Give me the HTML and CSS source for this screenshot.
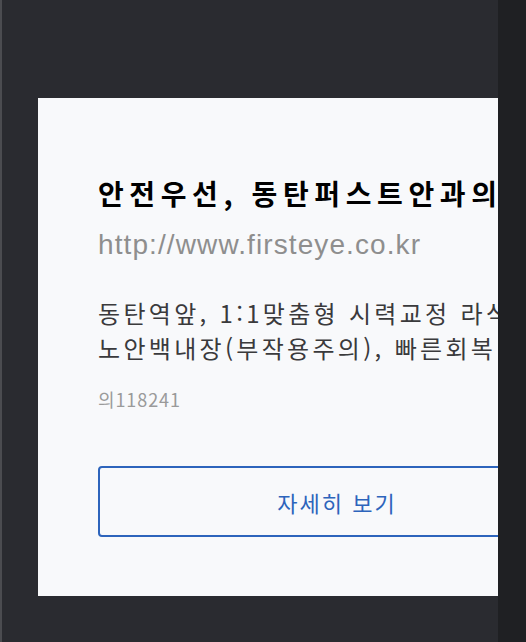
FILE: index.html
```html
<!DOCTYPE html>
<html lang="ko">
<head>
<meta charset="utf-8">
<title>동탄퍼스트안과</title>
<link rel="stylesheet" href="styles.css">
</head>
<body>
<div class="frame">
  <div class="stage">
    <div class="card">
      <h1 class="title">안전우선, 동탄퍼스트안과의 1:1 맞춤 시력교정</h1>
      <div class="url">http://www.firsteye.co.kr</div>
      <p class="desc">동탄역앞, 1:1맞춤형 시력교정 라식 라섹 스마일라식<br>노안백내장(부작용주의), 빠른회복 안전한 수술</p>
      <div class="meta">의118241</div>
      <a class="btn" href="#">자세히 보기</a>
    </div>
  </div>
  <div class="side"></div>
</div>
</body>
</html>
```
FILE: styles.css
```css
html, body {
  margin: 0;
  padding: 0;
  height: 100%;
  background: #2a2b30;
}
.frame {
  display: flex;
  height: 642px;
  border-left: 2px solid #4b4c50;
  box-sizing: border-box;
}
.stage {
  flex: 1;
  min-width: 0;
  overflow: hidden;
  padding-top: 98px;
  padding-left: 36px;
}
.side {
  width: 28px;
  flex: none;
  background: #1f2023;
}
.card {
  width: 598px;
  height: 498px;
  box-sizing: border-box;
  background: #f8f9fb;
  padding: 77px 60px 0 60px;
  font-family: "Noto Sans CJK KR", "Liberation Sans", sans-serif;
  white-space: nowrap;
}
.title {
  margin: 0;
  font-size: 28px;
  line-height: 36px;
  font-weight: 700;
  color: #000;
  letter-spacing: 5.6px;
}
.url {
  margin-top: 16px;
  font-family: "Liberation Sans", sans-serif;
  font-size: 28px;
  line-height: 36px;
  color: #8e8e8e;
  letter-spacing: 1.1px;
}
.desc {
  margin: 32px 0 0 0;
  font-size: 24px;
  line-height: 35px;
  color: #3a3a3c;
  letter-spacing: 3.3px;
}
.meta {
  margin-top: 22px;
  font-size: 18px;
  line-height: 24px;
  color: #9a9a9a;
  letter-spacing: 0.9px;
}
.btn {
  display: flex;
  align-items: center;
  justify-content: center;
  margin-top: 55px;
  width: 478px;
  height: 71px;
  box-sizing: border-box;
  border: 2px solid #2d64bc;
  border-radius: 4px;
  color: #2d64bc;
  font-size: 22px;
  letter-spacing: 2px;
  text-decoration: none;
}
```
